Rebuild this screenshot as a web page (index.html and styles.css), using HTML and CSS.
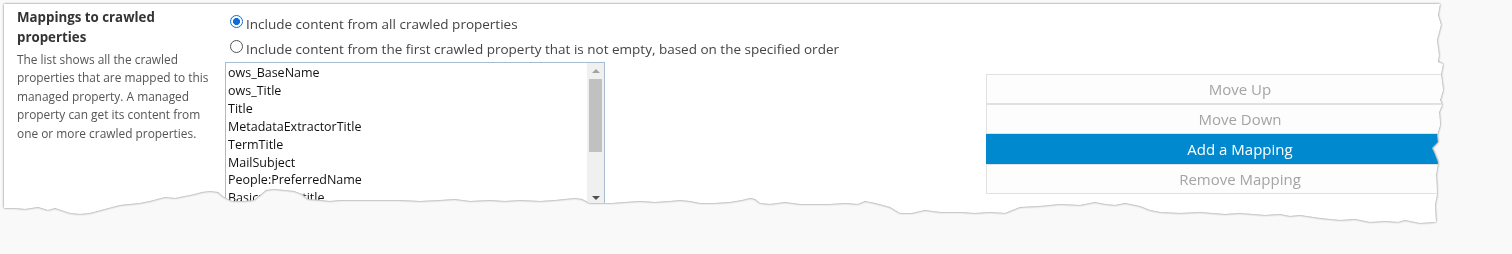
FILE: index.html
```html
<!DOCTYPE html>
<html>
<head>
<meta charset="utf-8">
<link rel="stylesheet" href="styles.css">
</head>
<body>
<div class="sheet">
  <div class="paper">
    <div class="label-col">
      <h3 class="heading">Mappings to crawled properties</h3>
      <p class="desc">The list shows all the crawled properties that are mapped to this managed property. A managed property can get its content from one or more crawled properties.</p>
    </div>
    <div class="control-col">
      <label class="radio-row"><span class="radio checked"></span><span>Include content from all crawled properties</span></label>
      <label class="radio-row second"><span class="radio"></span><span>Include content from the first crawled property that is not empty, based on the specified order</span></label>
      <div class="list-row">
        <div class="listbox">
          <ul class="items">
            <li>ows_BaseName</li>
            <li>ows_Title</li>
            <li>Title</li>
            <li>MetadataExtractorTitle</li>
            <li>TermTitle</li>
            <li>MailSubject</li>
            <li>People:PreferredName</li>
            <li>Basic:displaytitle</li>
          </ul>
          <div class="scrollbar">
            <span class="arrow up"></span>
            <span class="thumb"></span>
            <span class="track"></span>
            <span class="arrow down"></span>
          </div>
        </div>
        <div class="buttons">
          <div class="btn">Move Up</div>
          <div class="btn">Move Down</div>
          <div class="btn primary">Add a Mapping</div>
          <div class="btn">Remove Mapping</div>
        </div>
      </div>
    </div>
  </div>
</div>
</body>
</html>
```

FILE: styles.css
```css
html, body {
  margin: 0;
  padding: 0;
  background: #f9f9f9;
  width: 1512px;
  height: 254px;
  overflow: hidden;
  font-family: "Open Sans", "Noto Sans", sans-serif;
}
.sheet {
  margin: 4px 0 0 4px;
  width: 1440px;
  filter: drop-shadow(0 0 0.8px rgba(0, 0, 0, 0.55));
}
.paper {
  background: #fff;
  width: 1440px;
  height: 222px;
  box-sizing: border-box;
  padding: 4px 0 0 13px;
  display: flex;
  overflow: hidden;
  clip-path: polygon(
    0px 0px, 1436px 0px,
    1434px 11px, 1437px 21px, 1433px 36px, 1435px 51px, 1434px 58px, 1439px 60px, 1437px 71px,
    1439px 86px, 1436px 96px, 1438px 101px, 1435px 108px, 1436px 121px, 1433px 131px, 1434px 138px,
    1428px 144px, 1430px 148px, 1434px 158px, 1432px 171px, 1433px 191px, 1431px 201px, 1432px 218px,
    1416px 219px, 1401px 216px, 1394px 218px, 1381px 217px, 1366px 218px, 1351px 215px, 1336px 216px,
    1316px 214px, 1296px 211px, 1286px 212px, 1276px 210px, 1261px 211px, 1236px 209px, 1221px 210px,
    1196px 208px, 1176px 209px, 1156px 208px, 1146px 206px, 1136px 202px, 1121px 199px, 1111px 201px,
    1101px 200px, 1091px 198px, 1076px 201px, 1056px 200px, 1036px 202px, 1016px 203px, 1001px 209px,
    986px 208px, 971px 209px, 956px 208px, 936px 208px, 921px 206px, 908px 209px, 896px 209px,
    886px 203px, 871px 199px, 861px 197px, 854px 200px, 841px 199px, 826px 200px, 811px 200px,
    796px 200px, 781px 198px, 766px 200px, 756px 199px, 751px 195px, 746px 194px, 738px 196px,
    726px 198px, 711px 199px, 696px 199px, 686px 197px, 676px 196px, 666px 197px, 651px 198px,
    636px 197px, 621px 198px, 608px 199px, 596px 199px, 586px 199px, 578px 195px, 571px 194px,
    561px 195px, 551px 196px, 536px 197px, 516px 196px, 501px 197px, 486px 196px, 466px 197px,
    451px 195px, 436px 196px, 416px 197px, 396px 196px, 376px 196px, 356px 196px, 336px 196px,
    326px 197px, 316px 196px, 304px 195px, 298px 190px, 290px 187px, 280px 186px, 270px 185px,
    262px 186px, 256px 191px, 250px 196px, 240px 197px, 228px 197px, 220px 193px, 214px 188px,
    206px 187px, 198px 188px, 191px 190px, 181px 192px, 171px 194px, 161px 193px,
    146px 197px, 136px 199px, 116px 201px, 101px 205px, 86px 209px, 76px 210px, 66px 209px,
    51px 204px, 44px 206px, 34px 203px, 21px 205px, 11px 204px, 0px 204px
  );
}
.label-col {
  width: 200px;
  flex: none;
}
.heading {
  margin: 0;
  font-size: 13.3px;
  line-height: 19.5px;
  font-weight: 700;
  color: #333;
}
.desc {
  margin: 3px 0 0 0;
  font-size: 11.9px;
  line-height: 18.4px;
  color: #555;
}
.control-col {
  margin-left: 8px;
  flex: 1;
  display: flex;
  flex-direction: column;
}
.radio-row {
  display: flex;
  align-items: center;
  height: 25px;
  font-size: 13.5px;
  color: #444;
  margin-left: 5px;
}
.radio-row:first-child {
  margin-top: 3px;
}
.radio-row.second {
  height: 26px;
}
.radio {
  width: 13px;
  height: 13px;
  box-sizing: border-box;
  border: 1px solid #555;
  border-radius: 50%;
  margin: -5px 3px 0 0;
  background: #fff;
  flex: none;
}
.radio.checked {
  border-color: #0a6fd8;
  background: radial-gradient(circle, #0a6fd8 0 3.2px, #fff 3.8px);
}
.list-row {
  display: flex;
  align-items: flex-start;
}
.listbox {
  width: 380px;
  height: 142px;
  box-sizing: border-box;
  border: 1px solid #a7bccf;
  display: flex;
  flex: none;
}
.items {
  list-style: none;
  margin: 0;
  padding: 1px 0 0 2px;
  flex: 1;
  font-size: 12.5px;
  line-height: 17.9px;
  color: #111;
}
.scrollbar {
  width: 17px;
  background: #f0f0f0;
  display: flex;
  flex-direction: column;
  align-items: center;
}
.arrow {
  width: 0;
  height: 0;
  border-left: 4px solid transparent;
  border-right: 4px solid transparent;
  flex: none;
}
.arrow.up {
  border-bottom: 4px solid #a3a3a3;
  margin-top: 6px;
}
.arrow.down {
  border-top: 4px solid #505050;
  margin-bottom: 3px;
}
.thumb {
  width: 13px;
  height: 73px;
  background: #c1c1c1;
  margin-top: 6px;
  flex: none;
}
.track {
  flex: 1;
}
.buttons {
  margin: 12px 0 0 381px;
  width: 508px;
  flex: none;
  display: flex;
  flex-direction: column;
}
.btn {
  height: 30px;
  box-sizing: border-box;
  border: 1px solid #e1e1e1;
  background: #fdfdfd;
  color: #a4a4a4;
  font-size: 15px;
  display: flex;
  align-items: center;
  justify-content: center;
}
.btn.primary {
  background: #0089ce;
  border-color: #0089ce;
  color: #fff;
}
```
